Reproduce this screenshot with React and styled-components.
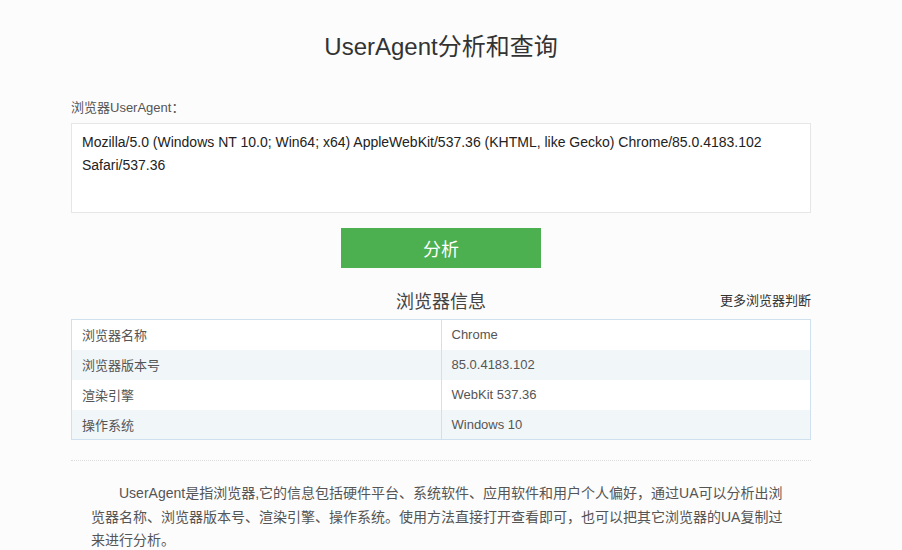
import styled, { createGlobalStyle } from 'styled-components';

const GlobalStyle = createGlobalStyle`
    body {
        margin: 0;
        background: #fcfcfc;
        font-family: "Liberation Sans", Arial, "Noto Sans CJK SC", sans-serif;
        color: #555;
    }
`;

const Page = styled.div`
    width: 740px;
    margin-left: 71px;
    padding-top: 31px;
`;

const Title = styled.h1`
    margin: 0;
    text-align: center;
    font-size: 24px;
    font-weight: normal;
    line-height: 32px;
    color: #333;
`;

const Label = styled.div`
    margin-top: 36px;
    font-size: 13px;
    line-height: 18px;
    color: #555;
`;

const UaBox = styled.textarea`
    display: block;
    box-sizing: border-box;
    width: 100%;
    height: 90px;
    margin-top: 6px;
    padding: 7px 10px;
    border: 1px solid #e6e6e6;
    background: #fff;
    font-family: inherit;
    font-size: 14px;
    line-height: 23px;
    color: #222;
    resize: none;
    outline: none;
`;

const Button = styled.button`
    display: block;
    width: 200px;
    height: 40px;
    margin: 15px auto 0;
    border: none;
    background: #4caf50;
    color: #fff;
    font-family: inherit;
    font-size: 18px;
`;

const InfoHead = styled.div`
    display: flex;
    align-items: center;
    justify-content: center;
    position: relative;
    height: 26px;
    margin-top: 19px;
`;

const InfoTitle = styled.h2`
    margin: 0;
    font-size: 18px;
    font-weight: normal;
    color: #444;
`;

const MoreLink = styled.a`
    position: absolute;
    right: 0;
    top: 3px;
    font-size: 13px;
    color: #333;
    text-decoration: none;
`;

const Table = styled.table`
    width: 100%;
    margin-top: 6px;
    border-collapse: collapse;
    border: 1px solid #cfe0ee;
    font-size: 13px;
`;

const Row = styled.tr`
    height: 30px;
    background: ${(p) => (p.$odd ? '#f1f6f9' : '#fff')};
`;

const Cell = styled.td`
    width: 50%;
    padding: 0 10px;
    border-right: 1px solid #cfe0ee;
    color: #555;
`;

const Divider = styled.hr`
    margin: 20px 0 0;
    border: none;
    border-top: 1px dotted #ddd;
`;

const Desc = styled.p`
    margin: 21px 0 0;
    padding: 0 20px;
    font-size: 14px;
    line-height: 23.5px;
    text-indent: 2em;
    color: #555;
`;

const rows = [
    ['浏览器名称', 'Chrome'],
    ['浏览器版本号', '85.0.4183.102'],
    ['渲染引擎', 'WebKit 537.36'],
    ['操作系统', 'Windows 10'],
];

const App = () => {
    return (
        <Page>
            <GlobalStyle />
            <Title>UserAgent分析和查询</Title>
            <Label>浏览器UserAgent：</Label>
            <UaBox
                readOnly
                value="Mozilla/5.0 (Windows NT 10.0; Win64; x64) AppleWebKit/537.36 (KHTML, like Gecko) Chrome/85.0.4183.102 Safari/537.36"
            />
            <Button>分析</Button>
            <InfoHead>
                <InfoTitle>浏览器信息</InfoTitle>
                <MoreLink href="#">更多浏览器判断</MoreLink>
            </InfoHead>
            <Table>
                <tbody>
                    {rows.map(([k, v], i) => (
                        <Row key={k} $odd={i % 2 === 1}>
                            <Cell>{k}</Cell>
                            <Cell>{v}</Cell>
                        </Row>
                    ))}
                </tbody>
            </Table>
            <Divider />
            <Desc>
                UserAgent是指浏览器,它的信息包括硬件平台、系统软件、应用软件和用户个人偏好，通过UA可以分析出浏览器名称、浏览器版本号、渲染引擎、操作系统。使用方法直接打开查看即可，也可以把其它浏览器的UA复制过来进行分析。
            </Desc>
        </Page>
    );
};

export default App;
